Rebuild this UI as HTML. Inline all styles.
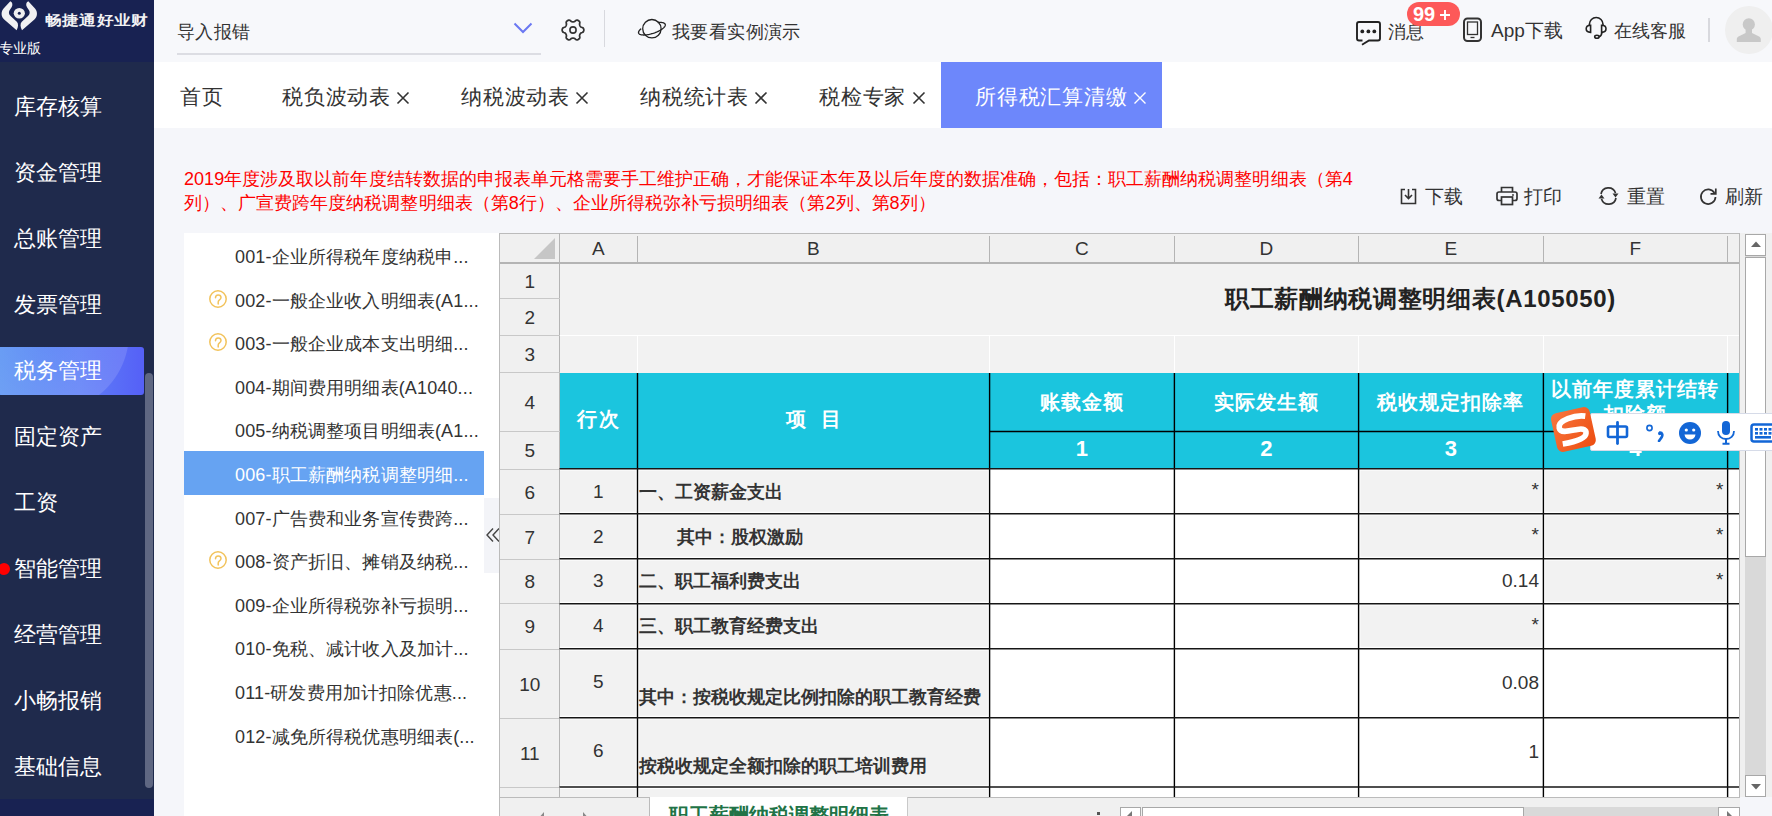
<!DOCTYPE html>
<html><head><meta charset="utf-8">
<style>
*{box-sizing:border-box}
body{margin:0;width:1772px;height:816px;overflow:hidden;position:relative;background:#f5f6fa;font-family:"Liberation Sans",sans-serif;color:#333}
.a{position:absolute;white-space:nowrap}
#sb{position:absolute;left:0;top:0;width:154px;height:816px;background:#1f2a4c;overflow:hidden}
.mi{position:absolute;left:13.5px;font-size:22px;line-height:30px;color:#fff}
#top{position:absolute;left:154px;top:0;width:1618px;height:62px;background:#f7f8fb}
#tabs{position:absolute;left:154px;top:62px;width:1618px;height:66px;background:#fff}
.tb{position:absolute;top:2px;height:66px;font-size:21px;letter-spacing:0.75px;line-height:66px;color:#333}
.x{font-size:22px}
.tool{position:absolute;top:184px;font-size:19px;line-height:26px;color:#333}
#list{position:absolute;left:184px;top:233px;width:316px;height:583px;background:#fff}
.li{position:absolute;left:51px;font-size:18px;letter-spacing:0.15px;line-height:26px;color:#333;margin-top:1.5px}
.q{position:absolute;left:25px;width:18px;height:18px;border:1.5px solid #f2c46d;border-radius:50%;color:#f2c46d;font-size:12px;line-height:15px;text-align:center}
#grid{position:absolute;left:500px;top:233px;width:1240px;height:564px;background:#fff;overflow:hidden}
</style></head><body>

<div id="sb">
  <div style="position:absolute;left:0;top:0;width:154px;height:62px;background:#182252"></div>
  <svg class="a" style="left:0;top:0" width="40" height="35" viewBox="0 0 40 35"><path d="M10.3 1.3 C12.6 2.3 13 5 11.6 7.2 L9.6 10.2 C8.4 12.2 8.8 14.3 10.6 16 L16.8 21.8 C18.6 23.6 18.4 27 16.6 30.2 L4.2 19.6 C0.8 16.5 0.9 11.5 3.6 8.6 Z" fill="#f0f0f2"/><path d="M28.3 1.3 C26 2.3 25.6 5 27 7.2 L29 10.2 C30.2 12.2 29.8 14.3 28 16 L21.8 21.8 C20 23.6 20.2 27 22 30.2 L34.4 19.6 C37.8 16.5 37.7 11.5 35 8.6 Z" fill="#f0f0f2"/><ellipse cx="19.3" cy="13.3" rx="5.6" ry="5.3" fill="#eeeef0"/><circle cx="19.3" cy="13.3" r="1.5" fill="#182252"/></svg>
  <div class="a" style="left:45px;top:8px;font-size:17px;line-height:22px;font-weight:bold;color:#f2f2f4;letter-spacing:0.2px;transform:scaleY(0.84);transform-origin:0 100%">畅捷通好业财</div>
  <div class="a" style="left:-1px;top:38.5px;font-size:13.5px;line-height:20px;color:#fff">专业版</div>
  <div style="position:absolute;left:0;top:799px;width:154px;height:17px;background:#182252"></div>
  <div class="mi" style="top:92px">库存核算</div>
  <div class="mi" style="top:158px">资金管理</div>
  <div class="mi" style="top:224px">总账管理</div>
  <div class="mi" style="top:290px">发票管理</div>
  <div style="position:absolute;left:0;top:347px;width:144px;height:48px;border-radius:0 3px 3px 0;background:radial-gradient(circle 79px at 50px -14px,rgba(255,255,255,0.04) 0,rgba(255,255,255,0.13) 78.5px,rgba(255,255,255,0) 79.5px),linear-gradient(90deg,#5992f3 0%,#5f80f7 55%,#5560f7 100%)"></div>
  <div class="mi" style="top:356px">税务管理</div>
  <div class="mi" style="top:422px">固定资产</div>
  <div class="mi" style="top:488px">工资</div>
  <div style="position:absolute;left:-2px;top:563px;width:12px;height:12px;border-radius:50%;background:#f00"></div>
  <div class="mi" style="top:554px">智能管理</div>
  <div class="mi" style="top:620px">经营管理</div>
  <div class="mi" style="top:686px">小畅报销</div>
  <div class="mi" style="top:752px">基础信息</div>
  <div style="position:absolute;left:145px;top:373px;width:8px;height:415px;border-radius:4px;background:#5f6782"></div>
</div>

<div id="top">
  <div class="a" style="left:23px;top:19px;font-size:18px;line-height:26px;color:#333;letter-spacing:0.3px">导入报错</div>
  <div style="position:absolute;left:23px;top:53px;width:364px;height:2px;background:#dcdde3"></div>
  <svg class="a" style="left:359px;top:21px" width="20" height="14" viewBox="0 0 20 14"><path d="M1.5 2.5 L10 11 L18.5 2.5" fill="none" stroke="#6b78f2" stroke-width="2"/></svg>
  <svg class="a" style="left:405.5px;top:16.8px" width="26" height="26" viewBox="0 0 26 26"><path d="M23.85 13.00 L23.80 13.57 L23.64 14.12 L23.38 14.64 L22.98 15.12 L22.18 15.46 L21.36 15.72 L20.93 16.04 L20.58 16.38 L20.29 16.72 L20.06 17.07 L19.87 17.46 L19.71 17.88 L19.60 18.34 L19.53 18.88 L19.72 19.72 L19.83 20.59 L19.61 21.17 L19.29 21.66 L18.89 22.07 L18.43 22.40 L17.91 22.63 L17.35 22.78 L16.77 22.81 L16.15 22.71 L15.46 22.18 L14.83 21.60 L14.33 21.39 L13.87 21.25 L13.43 21.18 L13.00 21.15 L12.57 21.18 L12.13 21.25 L11.67 21.39 L11.17 21.60 L10.54 22.18 L9.85 22.71 L9.23 22.81 L8.65 22.78 L8.09 22.63 L7.58 22.40 L7.11 22.07 L6.71 21.66 L6.39 21.17 L6.17 20.59 L6.28 19.72 L6.47 18.88 L6.40 18.34 L6.29 17.88 L6.13 17.46 L5.94 17.07 L5.71 16.72 L5.42 16.38 L5.07 16.04 L4.64 15.72 L3.82 15.46 L3.02 15.12 L2.62 14.64 L2.36 14.12 L2.20 13.57 L2.15 13.00 L2.20 12.43 L2.36 11.88 L2.62 11.36 L3.02 10.88 L3.82 10.54 L4.64 10.28 L5.07 9.96 L5.42 9.62 L5.71 9.28 L5.94 8.92 L6.13 8.54 L6.29 8.12 L6.40 7.66 L6.47 7.12 L6.28 6.28 L6.17 5.41 L6.39 4.83 L6.71 4.34 L7.11 3.93 L7.57 3.60 L8.09 3.37 L8.65 3.22 L9.23 3.19 L9.85 3.29 L10.54 3.82 L11.17 4.40 L11.67 4.61 L12.13 4.75 L12.57 4.82 L13.00 4.85 L13.43 4.82 L13.87 4.75 L14.33 4.61 L14.83 4.40 L15.46 3.82 L16.15 3.29 L16.77 3.19 L17.35 3.22 L17.91 3.37 L18.43 3.60 L18.89 3.93 L19.29 4.34 L19.61 4.83 L19.83 5.41 L19.72 6.28 L19.53 7.12 L19.60 7.66 L19.71 8.12 L19.87 8.54 L20.06 8.92 L20.29 9.28 L20.58 9.62 L20.93 9.96 L21.36 10.28 L22.18 10.54 L22.98 10.88 L23.38 11.36 L23.64 11.88 L23.80 12.43Z" fill="none" stroke="#333" stroke-width="1.75" stroke-linejoin="round"/><circle cx="13" cy="13" r="3.1" fill="none" stroke="#333" stroke-width="1.6"/></svg>
  <div style="position:absolute;left:450px;top:10px;width:1px;height:37px;background:#d8d9de"></div>
  <svg class="a" style="left:478px;top:14px" width="40" height="30" viewBox="0 0 40 30"><circle cx="19.9" cy="14.7" r="9.2" fill="none" stroke="#222" stroke-width="1.3"/><path d="M9.29 14.64 L8.75 15.08 L8.26 15.52 L7.82 15.95 L7.45 16.38 L7.13 16.80 L6.88 17.20 L6.69 17.60 L6.57 17.98 L6.51 18.35 L6.51 18.70 L6.59 19.03 L6.72 19.33 L6.92 19.62 L7.18 19.88 L7.51 20.12 L7.90 20.33 L8.34 20.51 L8.84 20.66 L9.39 20.79 L10.00 20.88 L10.65 20.95 L11.35 20.98 L12.09 20.99 L12.87 20.96 L13.68 20.90 L14.53 20.82 L15.40 20.70 L16.29 20.55 L17.20 20.38 L18.12 20.18 L19.05 19.95 L19.98 19.69 L20.92 19.41 L21.85 19.11 L22.77 18.79 L23.67 18.44 L24.56 18.08 L25.43 17.70 L26.26 17.31 L27.07 16.91 L27.84 16.49 L28.58 16.07 L29.27 15.63 L29.91 15.20 L30.51 14.76 L31.05 14.32 L31.54 13.88 L31.98 13.45 L32.35 13.02 L32.67 12.60 L32.92 12.20 L33.11 11.80 L33.23 11.42 L33.29 11.05 L33.29 10.70 L33.21 10.37 L33.08 10.07 L32.88 9.78 L32.62 9.52 L32.29 9.28 L31.90 9.07 L31.46 8.89 L30.96 8.74 L30.41 8.61 L29.80 8.52 L29.15 8.45 L28.45 8.42 L27.71 8.41 L26.93 8.44 L26.12 8.50 L25.70 8.54" fill="none" stroke="#222" stroke-width="1.3" stroke-linejoin="round"/></svg>
  <div class="a" style="left:518px;top:19px;font-size:18px;line-height:26px;color:#333;letter-spacing:0.4px">我要看实例演示</div>

  <svg class="a" style="left:1201px;top:20px" width="28" height="28" viewBox="0 0 28 28"><path d="M7.5 20.5 H4 Q2 20.5 2 18.5 V4 Q2 2 4 2 H23 Q25 2 25 4 V18.5 Q25 20.5 23 20.5 H14 L7 24.8" fill="none" stroke="#222" stroke-width="1.9"/><circle cx="7.3" cy="11.4" r="1.9" fill="#222"/><circle cx="13.4" cy="11.4" r="1.9" fill="#222"/><circle cx="19.3" cy="11.4" r="1.9" fill="#222"/></svg>
  <div class="a" style="left:1234px;top:19px;font-size:18px;line-height:26px;color:#333">消息</div>
  <div class="a" style="left:1253px;top:2px;width:53px;height:24px;border-radius:12px;background:#fd5959"></div><div class="a" style="left:1259px;top:1px;font-weight:bold;font-size:20px;line-height:26px;color:#fff;letter-spacing:-0.2px">99</div><svg class="a" style="left:1285px;top:9px" width="12" height="12" viewBox="0 0 12 12"><path d="M6 1 V11 M1 6 H11" stroke="#fff" stroke-width="1.9"/></svg>
  <svg class="a" style="left:1308px;top:17px" width="22" height="26" viewBox="0 0 22 26"><rect x="2" y="1.5" width="17" height="22.5" rx="3.5" fill="none" stroke="#333" stroke-width="2"/><rect x="5.5" y="5" width="10" height="12.5" fill="none" stroke="#333" stroke-width="1.3"/><path d="M8.5 20.5 H12.5" stroke="#333" stroke-width="1.3"/></svg>
  <div class="a" style="left:1337px;top:18px;font-size:19px;line-height:26px;color:#333">App下载</div>
  <svg class="a" style="left:1430px;top:14px" width="26" height="26" viewBox="0 0 26 26"><g fill="none" stroke="#222" stroke-width="1.6"><path d="M5.4 11.5 V10.3 A6.8 6.8 0 0 1 19 10.3 V11.5"/><path d="M6.6 11.3 V18.4 C4 18.4 2.2 17 2.2 14.85 C2.2 12.7 4 11.3 6.6 11.3 Z"/><path d="M17.6 11.3 V18.4 C20.2 18.4 22 17 22 14.85 C22 12.7 20.2 11.3 17.6 11.3 Z"/><path d="M17.9 18.6 C17.6 21 16.3 22.4 15 22.7"/><ellipse cx="12.9" cy="22.8" rx="2.2" ry="1.5"/></g></svg>
  <div class="a" style="left:1460px;top:18px;font-size:18px;line-height:26px;color:#333">在线客服</div>
  <div style="position:absolute;left:1554px;top:18px;width:2px;height:24px;background:#d8d9de"></div>
  <div style="position:absolute;left:1571px;top:6px;width:48px;height:48px;border-radius:50%;background:#efefef"></div>
  <svg class="a" style="left:1582px;top:17px" width="26" height="26" viewBox="0 0 26 26"><circle cx="12.8" cy="7.4" r="6.1" fill="#c8c8c8"/><path d="M0.8 25 V22.2 C0.8 20.8 1.6 20 3 19.3 L9.6 16 V12 H16 V16 L22.6 19.3 C24 20 24.8 20.8 24.8 22.2 V25 Z" fill="#c8c8c8"/></svg>
</div>
<div id="tabs">
  <div class="tb" style="left:26px">首页</div>
  <div class="tb" style="left:128px">税负波动表</div><svg class="a" style="left:242px;top:29px" width="14" height="14" viewBox="0 0 14 14"><path d="M1.5 1.5 L12.5 12.5 M12.5 1.5 L1.5 12.5" stroke="#333" stroke-width="1.6"/></svg>
  <div class="tb" style="left:307px">纳税波动表</div><svg class="a" style="left:421px;top:29px" width="14" height="14" viewBox="0 0 14 14"><path d="M1.5 1.5 L12.5 12.5 M12.5 1.5 L1.5 12.5" stroke="#333" stroke-width="1.6"/></svg>
  <div class="tb" style="left:486px">纳税统计表</div><svg class="a" style="left:600px;top:29px" width="14" height="14" viewBox="0 0 14 14"><path d="M1.5 1.5 L12.5 12.5 M12.5 1.5 L1.5 12.5" stroke="#333" stroke-width="1.6"/></svg>
  <div class="tb" style="left:665px">税检专家</div><svg class="a" style="left:758px;top:29px" width="14" height="14" viewBox="0 0 14 14"><path d="M1.5 1.5 L12.5 12.5 M12.5 1.5 L1.5 12.5" stroke="#333" stroke-width="1.6"/></svg>
  <div style="position:absolute;left:787px;top:0;width:221px;height:66px;background:#6d87fb"></div>
  <div class="tb" style="left:821px;color:#fff">所得税汇算清缴</div><svg class="a" style="left:979px;top:29px" width="14" height="14" viewBox="0 0 14 14"><path d="M1.5 1.5 L12.5 12.5 M12.5 1.5 L1.5 12.5" stroke="#fff" stroke-width="1.4"/></svg>
</div>

<div class="a" style="left:184px;top:167px;font-size:18px;line-height:24px;color:#f00;letter-spacing:0.04px">2019年度涉及取以前年度结转数据的申报表单元格需要手工维护正确，才能保证本年及以后年度的数据准确，包括：职工薪酬纳税调整明细表（第4<br>列）、广宣费跨年度纳税调整明细表（第8行）、企业所得税弥补亏损明细表（第2列、第8列）</div>
<svg class="a" style="left:1400px;top:188px" width="17" height="17" viewBox="0 0 17 17"><path d="M5 1.5 H1.5 V15.5 H15.5 V1.5 H12" fill="none" stroke="#333" stroke-width="1.6"/><path d="M8.5 1 V10 M5 7 L8.5 10.5 L12 7" fill="none" stroke="#333" stroke-width="1.6"/></svg>
<div class="tool" style="left:1425px">下载</div>
<svg class="a" style="left:1496px;top:186px" width="22" height="20" viewBox="0 0 22 20"><path d="M5.5 6 V1.5 H16.5 V6" fill="none" stroke="#333" stroke-width="1.7"/><path d="M5 14.5 H3 Q1 14.5 1 12.5 V8 Q1 6 3 6 H19 Q21 6 21 8 V12.5 Q21 14.5 19 14.5 H17" fill="none" stroke="#333" stroke-width="1.7"/><rect x="5.5" y="11" width="11" height="7.5" fill="none" stroke="#333" stroke-width="1.7"/><circle cx="17" cy="9" r="0.9" fill="#333"/></svg>
<div class="tool" style="left:1524px">打印</div>
<svg class="a" style="left:1597px;top:186px" width="23" height="20" viewBox="0 0 23 20"><path d="M4 8 A7.5 7.5 0 0 1 18.5 7" fill="none" stroke="#333" stroke-width="1.7"/><path d="M15.5 7.5 L21.5 7.5 L18.5 11.5 Z" fill="#333"/><path d="M19 12 A7.5 7.5 0 0 1 4.5 13" fill="none" stroke="#333" stroke-width="1.7"/><path d="M1.5 12.5 L7.5 12.5 L4.5 8.5 Z" fill="#333"/></svg>
<div class="tool" style="left:1627px">重置</div>
<svg class="a" style="left:1699px;top:187px" width="19" height="19" viewBox="0 0 19 19"><path d="M15.5 6 A7.3 7.3 0 1 0 16.5 10" fill="none" stroke="#333" stroke-width="1.7"/><path d="M16.8 1.5 V6.8 H11.5" fill="none" stroke="#333" stroke-width="1.7"/></svg>
<div class="tool" style="left:1725px">刷新</div>
<div id="list">
  <div style="position:absolute;left:0;top:218px;width:300px;height:44px;background:#66a3f2"></div>
  <div class="li" style="top:9px">001-企业所得税年度纳税申...</div>
  <div class="li" style="top:53px">002-一般企业收入明细表(A1...</div>
  <svg class="a" style="left:24px;top:56px" width="20" height="20" viewBox="0 0 20 20"><circle cx="10" cy="10" r="8.2" fill="none" stroke="#f2c35c" stroke-width="1.5"/><path transform="translate(0.2,0.9)" d="M7.3 7.9 C7.3 6 8.4 5 10 5 C11.6 5 12.8 6 12.8 7.6 C12.8 9.1 11.6 9.7 10.8 10.4 C10.2 10.9 10 11.5 10 12.4 V14" fill="none" stroke="#f2c35c" stroke-width="1.5" stroke-linecap="round"/></svg>
  <div class="li" style="top:96px">003-一般企业成本支出明细...</div>
  <svg class="a" style="left:24px;top:99px" width="20" height="20" viewBox="0 0 20 20"><circle cx="10" cy="10" r="8.2" fill="none" stroke="#f2c35c" stroke-width="1.5"/><path transform="translate(0.2,0.9)" d="M7.3 7.9 C7.3 6 8.4 5 10 5 C11.6 5 12.8 6 12.8 7.6 C12.8 9.1 11.6 9.7 10.8 10.4 C10.2 10.9 10 11.5 10 12.4 V14" fill="none" stroke="#f2c35c" stroke-width="1.5" stroke-linecap="round"/></svg>
  <div class="li" style="top:140px">004-期间费用明细表(A1040...</div>
  <div class="li" style="top:183px">005-纳税调整项目明细表(A1...</div>
  <div class="li" style="top:227px;color:#fff">006-职工薪酬纳税调整明细...</div>
  <div class="li" style="top:271px">007-广告费和业务宣传费跨...</div>
  <div class="li" style="top:314px">008-资产折旧、摊销及纳税...</div>
  <svg class="a" style="left:24px;top:317px" width="20" height="20" viewBox="0 0 20 20"><circle cx="10" cy="10" r="8.2" fill="none" stroke="#f2c35c" stroke-width="1.5"/><path transform="translate(0.2,0.9)" d="M7.3 7.9 C7.3 6 8.4 5 10 5 C11.6 5 12.8 6 12.8 7.6 C12.8 9.1 11.6 9.7 10.8 10.4 C10.2 10.9 10 11.5 10 12.4 V14" fill="none" stroke="#f2c35c" stroke-width="1.5" stroke-linecap="round"/></svg>
  <div class="li" style="top:358px">009-企业所得税弥补亏损明...</div>
  <div class="li" style="top:401px">010-免税、减计收入及加计...</div>
  <div class="li" style="top:445px">011-研发费用加计扣除优惠...</div>
  <div class="li" style="top:489px">012-减免所得税优惠明细表(...</div>
  <div style="position:absolute;left:300px;top:265px;width:15px;height:75px;background:#f3f4f8"></div>
  <svg class="a" style="left:301px;top:294px" width="16" height="16" viewBox="0 0 16 16"><path d="M8 1.5 L2 8 L8 14.5 M14 1.5 L8 8 L14 14.5" fill="none" stroke="#444" stroke-width="1.4"/></svg>
</div>
<!--GRID-->
<div id="grid">
<div style="position:absolute;left:0px;top:0px;width:1240px;height:30px;background:#f0f0f0"></div>
<div style="position:absolute;left:0px;top:30px;width:59.5px;height:534px;background:#f0f0f0"></div>
<div style="position:absolute;left:59.5px;top:30px;width:1179.5px;height:109.5px;background:#f2f2f2"></div>
<div style="position:absolute;left:59.5px;top:101.5px;width:1179.5px;height:1.0px;background:#fff"></div>
<div style="position:absolute;left:136.5px;top:102px;width:1.0px;height:37.5px;background:#fff"></div>
<div style="position:absolute;left:489.0px;top:102px;width:1.0px;height:37.5px;background:#fff"></div>
<div style="position:absolute;left:673.5px;top:102px;width:1.0px;height:37.5px;background:#fff"></div>
<div style="position:absolute;left:858.0px;top:102px;width:1.0px;height:37.5px;background:#fff"></div>
<div style="position:absolute;left:1042.5px;top:102px;width:1.0px;height:37.5px;background:#fff"></div>
<div style="position:absolute;left:1227.0px;top:102px;width:1.0px;height:37.5px;background:#fff"></div>
<div style="position:absolute;left:59.5px;top:140px;width:1179.5px;height:96px;background:#1bc5de"></div>
<div style="position:absolute;left:59.5px;top:236px;width:430.0px;height:45px;background:#f2f2f2"></div>
<div style="position:absolute;left:489.5px;top:236px;width:369.0px;height:45px;background:#fff"></div>
<div style="position:absolute;left:858.5px;top:236px;width:184.5px;height:45px;background:#f2f2f2"></div>
<div style="position:absolute;left:1043px;top:236px;width:184.5px;height:45px;background:#f2f2f2"></div>
<div style="position:absolute;left:1227.5px;top:236px;width:11.5px;height:45px;background:#fff"></div>
<div style="position:absolute;left:59.5px;top:281px;width:430.0px;height:45px;background:#f2f2f2"></div>
<div style="position:absolute;left:489.5px;top:281px;width:369.0px;height:45px;background:#fff"></div>
<div style="position:absolute;left:858.5px;top:281px;width:184.5px;height:45px;background:#f2f2f2"></div>
<div style="position:absolute;left:1043px;top:281px;width:184.5px;height:45px;background:#f2f2f2"></div>
<div style="position:absolute;left:1227.5px;top:281px;width:11.5px;height:45px;background:#fff"></div>
<div style="position:absolute;left:59.5px;top:326px;width:430.0px;height:44.5px;background:#f2f2f2"></div>
<div style="position:absolute;left:489.5px;top:326px;width:369.0px;height:44.5px;background:#fff"></div>
<div style="position:absolute;left:858.5px;top:326px;width:184.5px;height:44.5px;background:#fff"></div>
<div style="position:absolute;left:1043px;top:326px;width:184.5px;height:44.5px;background:#f2f2f2"></div>
<div style="position:absolute;left:1227.5px;top:326px;width:11.5px;height:44.5px;background:#fff"></div>
<div style="position:absolute;left:59.5px;top:370.5px;width:430.0px;height:45.5px;background:#f2f2f2"></div>
<div style="position:absolute;left:489.5px;top:370.5px;width:369.0px;height:45.5px;background:#fff"></div>
<div style="position:absolute;left:858.5px;top:370.5px;width:184.5px;height:45.5px;background:#f2f2f2"></div>
<div style="position:absolute;left:1043px;top:370.5px;width:184.5px;height:45.5px;background:#fff"></div>
<div style="position:absolute;left:1227.5px;top:370.5px;width:11.5px;height:45.5px;background:#fff"></div>
<div style="position:absolute;left:59.5px;top:416px;width:430.0px;height:69px;background:#f2f2f2"></div>
<div style="position:absolute;left:489.5px;top:416px;width:369.0px;height:69px;background:#fff"></div>
<div style="position:absolute;left:858.5px;top:416px;width:184.5px;height:69px;background:#fff"></div>
<div style="position:absolute;left:1043px;top:416px;width:184.5px;height:69px;background:#fff"></div>
<div style="position:absolute;left:1227.5px;top:416px;width:11.5px;height:69px;background:#fff"></div>
<div style="position:absolute;left:59.5px;top:485px;width:430.0px;height:69px;background:#f2f2f2"></div>
<div style="position:absolute;left:489.5px;top:485px;width:369.0px;height:69px;background:#fff"></div>
<div style="position:absolute;left:858.5px;top:485px;width:184.5px;height:69px;background:#fff"></div>
<div style="position:absolute;left:1043px;top:485px;width:184.5px;height:69px;background:#fff"></div>
<div style="position:absolute;left:1227.5px;top:485px;width:11.5px;height:69px;background:#fff"></div>
<div style="position:absolute;left:59.5px;top:554px;width:430.0px;height:10px;background:#f2f2f2"></div>
<div style="position:absolute;left:489.5px;top:554px;width:369.0px;height:10px;background:#fff"></div>
<div style="position:absolute;left:858.5px;top:554px;width:184.5px;height:10px;background:#fff"></div>
<div style="position:absolute;left:1043px;top:554px;width:184.5px;height:10px;background:#fff"></div>
<div style="position:absolute;left:1227.5px;top:554px;width:11.5px;height:10px;background:#fff"></div>
<div style="position:absolute;left:-1px;top:0px;width:1241px;height:1px;background:#bbb"></div>
<div style="position:absolute;left:0px;top:29px;width:1239px;height:1.5px;background:#b4b4b4"></div>
<div style="position:absolute;left:-1px;top:0px;width:1px;height:564px;background:#bbb"></div>
<div style="position:absolute;left:59px;top:0px;width:1px;height:564px;background:#b4b4b4"></div>
<div style="position:absolute;left:136.5px;top:3px;width:1.0px;height:27px;background:#b4b4b4"></div>
<div style="position:absolute;left:489.0px;top:3px;width:1.0px;height:27px;background:#b4b4b4"></div>
<div style="position:absolute;left:673.5px;top:3px;width:1.0px;height:27px;background:#b4b4b4"></div>
<div style="position:absolute;left:858.0px;top:3px;width:1.0px;height:27px;background:#b4b4b4"></div>
<div style="position:absolute;left:1042.5px;top:3px;width:1.0px;height:27px;background:#b4b4b4"></div>
<div style="position:absolute;left:1227.0px;top:3px;width:1.0px;height:27px;background:#b4b4b4"></div>
<div style="position:absolute;left:1238.5px;top:3px;width:1.0px;height:27px;background:#b4b4b4"></div>
<div style="position:absolute;left:0px;top:64.5px;width:59.5px;height:1.0px;background:#c8c8c8"></div>
<div style="position:absolute;left:0px;top:101.5px;width:59.5px;height:1.0px;background:#c8c8c8"></div>
<div style="position:absolute;left:0px;top:139.0px;width:59.5px;height:1.0px;background:#c8c8c8"></div>
<div style="position:absolute;left:0px;top:197.5px;width:59.5px;height:1.0px;background:#c8c8c8"></div>
<div style="position:absolute;left:0px;top:235.5px;width:59.5px;height:1.0px;background:#c8c8c8"></div>
<div style="position:absolute;left:0px;top:280.5px;width:59.5px;height:1.0px;background:#c8c8c8"></div>
<div style="position:absolute;left:0px;top:325.5px;width:59.5px;height:1.0px;background:#c8c8c8"></div>
<div style="position:absolute;left:0px;top:370.0px;width:59.5px;height:1.0px;background:#c8c8c8"></div>
<div style="position:absolute;left:0px;top:415.5px;width:59.5px;height:1.0px;background:#c8c8c8"></div>
<div style="position:absolute;left:0px;top:484.5px;width:59.5px;height:1.0px;background:#c8c8c8"></div>
<div style="position:absolute;left:0px;top:553.5px;width:59.5px;height:1.0px;background:#c8c8c8"></div>
<svg style="position:absolute;left:33px;top:4px" width="23" height="23"><path d="M22 1 V22 H1 Z" fill="#c6c6c6"/></svg>
<svg style="position:absolute;left:0;top:0" width="1240" height="564"><defs><clipPath id="dc"><rect x="60" y="236.2" width="1180" height="330"/></clipPath></defs><g clip-path="url(#dc)" stroke="#fff" fill="none"><path d="M137.5 236 V564 M489.6 236 V564 M674.4000000000001 236 V564 M858.5999999999999 236 V564 M1043.4 236 V564 M1227.6 236 V564" stroke-width="3.6"/><path d="M59.5 235.7 H1239 M59.5 280.70000000000005 H1239 M59.5 325.70000000000005 H1239 M59.5 370.70000000000005 H1239 M59.5 415.70000000000005 H1239 M59.5 484.70000000000005 H1239 M59.5 554.1 H1239" stroke-width="3.8"/></g></svg>
<svg style="position:absolute;left:0;top:0" width="1240" height="564"><path d="M137.5 140 V564 M489.6 140 V564 M674.4000000000001 140 V564 M858.5999999999999 140 V564 M1043.4 140 V564 M1227.6 140 V564" stroke="#000" stroke-width="1.4" fill="none"/><path d="M59.5 235.7 H1239 M59.5 280.70000000000005 H1239 M59.5 325.70000000000005 H1239 M59.5 370.70000000000005 H1239 M59.5 415.70000000000005 H1239 M59.5 484.70000000000005 H1239 M59.5 554.1 H1239" stroke="#161616" stroke-width="1.5" fill="none"/><path d="M489.5 198.5 H1239" stroke="#000" stroke-width="1.3" fill="none"/></svg>
<div style="position:absolute;left:1239px;top:0px;width:1px;height:564px;background:#b8b8b8"></div>
<div style="position:absolute;left:59.5px;top:0px;width:77.5px;height:32px;display:flex;align-items:center;justify-content:center;white-space:nowrap;font-size:19px;color:#333">A</div>
<div style="position:absolute;left:137px;top:0px;width:352.5px;height:32px;display:flex;align-items:center;justify-content:center;white-space:nowrap;font-size:19px;color:#333">B</div>
<div style="position:absolute;left:489.5px;top:0px;width:184.5px;height:32px;display:flex;align-items:center;justify-content:center;white-space:nowrap;font-size:19px;color:#333">C</div>
<div style="position:absolute;left:674px;top:0px;width:184.5px;height:32px;display:flex;align-items:center;justify-content:center;white-space:nowrap;font-size:19px;color:#333">D</div>
<div style="position:absolute;left:858.5px;top:0px;width:184.5px;height:32px;display:flex;align-items:center;justify-content:center;white-space:nowrap;font-size:19px;color:#333">E</div>
<div style="position:absolute;left:1043px;top:0px;width:184.5px;height:32px;display:flex;align-items:center;justify-content:center;white-space:nowrap;font-size:19px;color:#333">F</div>
<div style="position:absolute;left:0px;top:30px;width:59.5px;height:37px;display:flex;align-items:center;justify-content:center;white-space:nowrap;font-size:19px;color:#333">1</div>
<div style="position:absolute;left:0px;top:65px;width:59.5px;height:39px;display:flex;align-items:center;justify-content:center;white-space:nowrap;font-size:19px;color:#333">2</div>
<div style="position:absolute;left:0px;top:102px;width:59.5px;height:39.5px;display:flex;align-items:center;justify-content:center;white-space:nowrap;font-size:19px;color:#333">3</div>
<div style="position:absolute;left:0px;top:139.5px;width:59.5px;height:60.5px;display:flex;align-items:center;justify-content:center;white-space:nowrap;font-size:19px;color:#333">4</div>
<div style="position:absolute;left:0px;top:198px;width:59.5px;height:40px;display:flex;align-items:center;justify-content:center;white-space:nowrap;font-size:19px;color:#333">5</div>
<div style="position:absolute;left:0px;top:236px;width:59.5px;height:47px;display:flex;align-items:center;justify-content:center;white-space:nowrap;font-size:19px;color:#333">6</div>
<div style="position:absolute;left:0px;top:281px;width:59.5px;height:47px;display:flex;align-items:center;justify-content:center;white-space:nowrap;font-size:19px;color:#333">7</div>
<div style="position:absolute;left:0px;top:326px;width:59.5px;height:46.5px;display:flex;align-items:center;justify-content:center;white-space:nowrap;font-size:19px;color:#333">8</div>
<div style="position:absolute;left:0px;top:370.5px;width:59.5px;height:47.5px;display:flex;align-items:center;justify-content:center;white-space:nowrap;font-size:19px;color:#333">9</div>
<div style="position:absolute;left:0px;top:416px;width:59.5px;height:71px;display:flex;align-items:center;justify-content:center;white-space:nowrap;font-size:19px;color:#333">10</div>
<div style="position:absolute;left:0px;top:485px;width:59.5px;height:71px;display:flex;align-items:center;justify-content:center;white-space:nowrap;font-size:19px;color:#333">11</div>
<div style="position:absolute;left:600px;top:30px;width:640px;height:72px;display:flex;align-items:center;justify-content:center;white-space:nowrap;font-size:24px;font-weight:bold;color:#222;justify-content:flex-start;padding-left:125px;letter-spacing:0.68px">职工薪酬纳税调整明细表(A105050)</div>
<div style="position:absolute;left:59.5px;top:140px;width:77.5px;height:93px;display:flex;align-items:center;justify-content:center;white-space:nowrap;font-family:'Liberation Serif',serif;font-weight:bold;font-size:20px;color:#fff;letter-spacing:2px;padding-left:2px">行次</div>
<div style="position:absolute;left:137px;top:140px;width:352.5px;height:93px;display:flex;align-items:center;justify-content:center;white-space:nowrap;font-family:'Liberation Serif',serif;font-weight:bold;font-size:20px;color:#fff">项&nbsp;&nbsp;&nbsp;目</div>
<div style="position:absolute;left:489.5px;top:140px;width:184.5px;height:58px;display:flex;align-items:center;justify-content:center;white-space:nowrap;font-family:'Liberation Serif',serif;font-weight:bold;font-size:20px;color:#fff;letter-spacing:1px">账载金额</div>
<div style="position:absolute;left:674px;top:140px;width:184.5px;height:58px;display:flex;align-items:center;justify-content:center;white-space:nowrap;font-family:'Liberation Serif',serif;font-weight:bold;font-size:20px;color:#fff;letter-spacing:1px">实际发生额</div>
<div style="position:absolute;left:858.5px;top:140px;width:184.5px;height:58px;display:flex;align-items:center;justify-content:center;white-space:nowrap;font-family:'Liberation Serif',serif;font-weight:bold;font-size:20px;color:#fff;letter-spacing:1px">税收规定扣除率</div>
<div style="position:absolute;left:1043px;top:140px;width:184.5px;height:32px;display:flex;align-items:center;justify-content:center;white-space:nowrap;font-family:'Liberation Serif',serif;font-weight:bold;font-size:20px;color:#fff;letter-spacing:1px">以前年度累计结转</div>
<div style="position:absolute;left:1043px;top:170px;width:184.5px;height:22px;display:flex;align-items:center;justify-content:center;white-space:nowrap;font-family:'Liberation Serif',serif;font-weight:bold;font-size:20px;color:#fff;letter-spacing:1px">扣除额</div>
<div style="position:absolute;left:489.5px;top:198px;width:184.5px;height:35px;display:flex;align-items:center;justify-content:center;white-space:nowrap;font-weight:bold;font-size:22px;color:#fff">1</div>
<div style="position:absolute;left:674px;top:198px;width:184.5px;height:35px;display:flex;align-items:center;justify-content:center;white-space:nowrap;font-weight:bold;font-size:22px;color:#fff">2</div>
<div style="position:absolute;left:858.5px;top:198px;width:184.5px;height:35px;display:flex;align-items:center;justify-content:center;white-space:nowrap;font-weight:bold;font-size:22px;color:#fff">3</div>
<div style="position:absolute;left:1043px;top:198px;width:184.5px;height:35px;display:flex;align-items:center;justify-content:center;white-space:nowrap;font-weight:bold;font-size:22px;color:#fff">4</div>
<div style="position:absolute;left:59.5px;top:236px;width:77.5px;height:45px;display:flex;align-items:center;justify-content:center;white-space:nowrap;font-size:19px;color:#333">1</div>
<div style="position:absolute;left:59.5px;top:281px;width:77.5px;height:45px;display:flex;align-items:center;justify-content:center;white-space:nowrap;font-size:19px;color:#333">2</div>
<div style="position:absolute;left:59.5px;top:326px;width:77.5px;height:44.5px;display:flex;align-items:center;justify-content:center;white-space:nowrap;font-size:19px;color:#333">3</div>
<div style="position:absolute;left:59.5px;top:370.5px;width:77.5px;height:45.5px;display:flex;align-items:center;justify-content:center;white-space:nowrap;font-size:19px;color:#333">4</div>
<div style="position:absolute;left:59.5px;top:416px;width:77.5px;height:65px;display:flex;align-items:center;justify-content:center;white-space:nowrap;font-size:19px;color:#333">5</div>
<div style="position:absolute;left:59.5px;top:485px;width:77.5px;height:65px;display:flex;align-items:center;justify-content:center;white-space:nowrap;font-size:19px;color:#333">6</div>
<div style="position:absolute;left:137px;top:236px;width:352.5px;height:45px;display:flex;align-items:center;justify-content:flex-start;white-space:nowrap;font-size:18px;font-weight:bold;color:#333;padding-left:2px">一、工资薪金支出</div>
<div style="position:absolute;left:137px;top:281px;width:352.5px;height:45px;display:flex;align-items:center;justify-content:flex-start;white-space:nowrap;font-size:18px;font-weight:bold;color:#333;padding-left:40px">其中：股权激励</div>
<div style="position:absolute;left:137px;top:326px;width:352.5px;height:44.5px;display:flex;align-items:center;justify-content:flex-start;white-space:nowrap;font-size:18px;font-weight:bold;color:#333;padding-left:2px">二、职工福利费支出</div>
<div style="position:absolute;left:137px;top:370.5px;width:352.5px;height:45.5px;display:flex;align-items:center;justify-content:flex-start;white-space:nowrap;font-size:18px;font-weight:bold;color:#333;padding-left:2px">三、职工教育经费支出</div>
<div style="position:absolute;left:137px;top:446px;width:352.5px;height:36px;display:flex;align-items:center;justify-content:flex-start;white-space:nowrap;font-size:18px;font-weight:bold;color:#333;padding-left:2px">其中：按税收规定比例扣除的职工教育经费</div>
<div style="position:absolute;left:137px;top:515px;width:352.5px;height:36px;display:flex;align-items:center;justify-content:flex-start;white-space:nowrap;font-size:18px;font-weight:bold;color:#333;padding-left:2px">按税收规定全额扣除的职工培训费用</div>
<div style="position:absolute;left:858.5px;top:236px;width:184.5px;height:45px;display:flex;align-items:center;justify-content:flex-end;white-space:nowrap;font-size:19px;color:#333;align-items:flex-start;padding-right:4px;padding-top:10px">*</div>
<div style="position:absolute;left:1043px;top:236px;width:184.5px;height:45px;display:flex;align-items:center;justify-content:flex-end;white-space:nowrap;font-size:19px;color:#333;align-items:flex-start;padding-right:4px;padding-top:10px">*</div>
<div style="position:absolute;left:858.5px;top:281px;width:184.5px;height:45px;display:flex;align-items:center;justify-content:flex-end;white-space:nowrap;font-size:19px;color:#333;align-items:flex-start;padding-right:4px;padding-top:10px">*</div>
<div style="position:absolute;left:1043px;top:281px;width:184.5px;height:45px;display:flex;align-items:center;justify-content:flex-end;white-space:nowrap;font-size:19px;color:#333;align-items:flex-start;padding-right:4px;padding-top:10px">*</div>
<div style="position:absolute;left:1043px;top:326px;width:184.5px;height:44.5px;display:flex;align-items:center;justify-content:flex-end;white-space:nowrap;font-size:19px;color:#333;align-items:flex-start;padding-right:4px;padding-top:10px">*</div>
<div style="position:absolute;left:858.5px;top:370.5px;width:184.5px;height:45.5px;display:flex;align-items:center;justify-content:flex-end;white-space:nowrap;font-size:19px;color:#333;align-items:flex-start;padding-right:4px;padding-top:10px">*</div>
<div style="position:absolute;left:858.5px;top:326px;width:184.5px;height:44.5px;display:flex;align-items:center;justify-content:flex-end;white-space:nowrap;font-size:19px;color:#333;padding-right:4px">0.14</div>
<div style="position:absolute;left:858.5px;top:416px;width:184.5px;height:67px;display:flex;align-items:center;justify-content:flex-end;white-space:nowrap;font-size:19px;color:#333;padding-right:4px">0.08</div>
<div style="position:absolute;left:858.5px;top:485px;width:184.5px;height:67px;display:flex;align-items:center;justify-content:flex-end;white-space:nowrap;font-size:19px;color:#333;padding-right:4px">1</div>
</div>
<!--/GRID-->
<div style="position:absolute;left:499px;top:233px;width:1px;height:564px;background:#bbb"></div>

<!-- vertical scrollbar -->
<div style="position:absolute;left:1740px;top:233px;width:32px;height:564px;background:#f0f0f0"></div>
<div style="position:absolute;left:1745px;top:256px;width:21px;height:520px;background:#d9d9d9"></div>
<div style="position:absolute;left:1745px;top:234px;width:21px;height:22px;background:#fff;border:1px solid #a8a8a8"></div>
<svg class="a" style="left:1750px;top:240px" width="12" height="8"><path d="M1 7 L6 1.5 L11 7 Z" fill="#666"/></svg>
<div style="position:absolute;left:1745px;top:257px;width:21px;height:300px;background:#fff;border:1px solid #a8a8a8"></div>
<div style="position:absolute;left:1745px;top:775px;width:21px;height:22px;background:#fff;border:1px solid #a8a8a8"></div>
<svg class="a" style="left:1750px;top:783px" width="12" height="8"><path d="M1 1 L6 6.5 L11 1 Z" fill="#666"/></svg>
<!-- sheet bar -->
<div style="position:absolute;left:499px;top:797px;width:1241px;height:19px;background:#f0f0f0;border-top:1px solid #bbb;border-left:1px solid #bbb"></div>
<svg class="a" style="left:538px;top:810px" width="50" height="6"><path d="M6 2 L2.5 6 H6 Z M45 2 L48.5 6 H45 Z" fill="#888"/></svg>
<div style="position:absolute;left:649px;top:797px;width:259px;height:19px;background:#fff;border-left:1px solid #bbb;border-right:1px solid #c9c9c9"></div>
<div class="a" style="left:669px;top:802px;font-size:20px;line-height:26px;font-weight:bold;color:#217346">职工薪酬纳税调整明细表</div>
<div style="position:absolute;left:1097px;top:812px;width:3px;height:3px;background:#555"></div>
<div style="position:absolute;left:1120px;top:807px;width:21px;height:9px;background:#fff;border:1px solid #a8a8a8;border-bottom:none"></div><svg class="a" style="left:1126px;top:811px" width="8" height="5"><path d="M6 0 L1 5 H6 Z" fill="#777"/></svg>
<div style="position:absolute;left:1142px;top:807px;width:382px;height:9px;background:#fff;border:1px solid #a8a8a8;border-bottom:none"></div>
<div style="position:absolute;left:1524px;top:807px;width:194px;height:9px;background:#d9d9d9"></div>
<div style="position:absolute;left:1718px;top:807px;width:22px;height:9px;background:#fff;border:1px solid #a8a8a8;border-bottom:none"></div><svg class="a" style="left:1725px;top:811px" width="8" height="5"><path d="M2 0 L7 5 H2 Z" fill="#777"/></svg>
<!-- IME bar -->
<div style="position:absolute;left:1590px;top:413px;width:190px;height:38px;background:#fff;border:1px solid #d6dbe8;border-radius:2px"></div>
<svg class="a" style="left:1545px;top:401px" width="58" height="56" viewBox="0 0 58 56"><defs><linearGradient id="sg" x1="0" y1="0" x2="1" y2="1"><stop offset="0" stop-color="#f9773f"/><stop offset="1" stop-color="#ec4d10"/></linearGradient></defs><g transform="translate(28.4,28.5) rotate(-12.5)"><rect x="-19.8" y="-19.8" width="39.6" height="39.6" rx="6" fill="url(#sg)"/><path d="M14.5 -10.5 C5 -14 -13.5 -12.5 -13.5 -4.5 C-13.5 1.5 -3 0.5 4 0.8 C10.5 1 12.5 3.5 11.5 6.5 C10 11 1 12.5 -13.5 11.8" fill="none" stroke="#fff" stroke-width="5.6"/></g></svg>
<svg class="a" style="left:1606px;top:421px" width="24" height="24" viewBox="0 0 24 24"><rect x="2" y="5.5" width="19" height="10.5" rx="1.5" fill="none" stroke="#1266d6" stroke-width="2.6"/><path d="M11.5 1.5 V22.5" stroke="#1266d6" stroke-width="2.8" stroke-linecap="round"/></svg>
<svg class="a" style="left:1645px;top:422px" width="20" height="20" viewBox="0 0 20 20"><circle cx="4.5" cy="6" r="2.6" fill="none" stroke="#1266d6" stroke-width="1.6"/><path d="M15 10.5 C17.5 10.5 17.8 13 16.8 15 L14 19" fill="none" stroke="#1266d6" stroke-width="2.6" stroke-linecap="round"/><circle cx="14.8" cy="11.5" r="1.8" fill="#1266d6"/></svg>
<svg class="a" style="left:1678px;top:421px" width="24" height="24" viewBox="0 0 24 24"><circle cx="12" cy="12" r="11" fill="#1266d6"/><circle cx="8.3" cy="9" r="1.6" fill="#fff"/><circle cx="15.7" cy="9" r="1.6" fill="#fff"/><path d="M6.5 13.5 H17.5 C17 17 15 18.5 12 18.5 C9 18.5 7 17 6.5 13.5 Z" fill="#fff"/></svg>
<svg class="a" style="left:1716px;top:420px" width="20" height="26" viewBox="0 0 20 26"><rect x="6" y="1" width="8" height="14" rx="4" fill="#1266d6"/><path d="M2 11 C2 16 5.5 19 10 19 C14.5 19 18 16 18 11" fill="none" stroke="#1266d6" stroke-width="1.8"/><path d="M10 19 V23.5 M6.5 23.8 H13.5" stroke="#1266d6" stroke-width="2"/></svg>
<svg class="a" style="left:1750px;top:423px" width="22" height="20" viewBox="0 0 22 20"><rect x="1.5" y="1.5" width="26" height="17" rx="2.5" fill="none" stroke="#1266d6" stroke-width="2.5"/><g fill="#1266d6"><rect x="5" y="5" width="3" height="2.6"/><rect x="9.5" y="5" width="3" height="2.6"/><rect x="14" y="5" width="3" height="2.6"/><rect x="18.5" y="5" width="3" height="2.6"/><rect x="5" y="9" width="3" height="2.6"/><rect x="9.5" y="9" width="3" height="2.6"/><rect x="14" y="9" width="3" height="2.6"/><rect x="18.5" y="9" width="3" height="2.6"/><rect x="5" y="13" width="16" height="2.6"/></g></svg>

</body></html>
